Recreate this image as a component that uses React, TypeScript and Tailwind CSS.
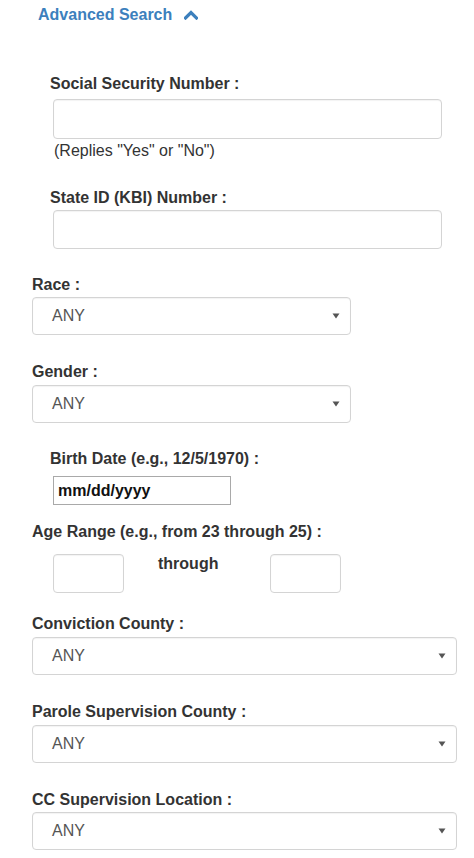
import React from 'react';

const Caret: React.FC = () => (
  <svg width="8" height="6" viewBox="0 0 8 6" className="shrink-0">
    <path d="M0.5 0.5 L7.5 0.5 L4 5.5 Z" fill="#555" />
  </svg>
);

const SelectBox: React.FC<{ width: string; mt: string }> = ({ width, mt }) => (
  <div
    className={`${width} ${mt} h-[38px] flex items-center justify-between pl-[19px] pr-[10px] border border-[#d4d4d4] rounded-[4px] bg-white shadow-[inset_0_1px_1px_rgba(0,0,0,0.05)] text-[16px] text-[#555]`}
  >
    <span>ANY</span>
    <Caret />
  </div>
);

const TextBox: React.FC<{ className: string }> = ({ className }) => (
  <div className={`border border-[#d4d4d4] rounded-[4px] bg-white shadow-[inset_0_1px_1px_rgba(0,0,0,0.05)] ${className}`} />
);

const Label: React.FC<{ children: React.ReactNode; className?: string }> = ({ children, className = '' }) => (
  <div className={`text-[16px] leading-[20px] font-bold text-[#333] ${className}`}>{children}</div>
);

const App: React.FC = () => {
  return (
    <div
      className="w-[474px] h-[858px] bg-white overflow-hidden"
      style={{ fontFamily: '"Liberation Sans", Arial, sans-serif' }}
    >
      {/* header */}
      <div className="mt-[5px] pl-[38px] flex items-center gap-[12px] text-[16px] leading-[20px] font-bold text-[#3c80bd]">
        <span>Advanced Search</span>
        <svg width="14" height="10" viewBox="0 0 14 10">
          <path d="M1.5 8 L7 2.5 L12.5 8" fill="none" stroke="#3c80bd" strokeWidth="3.2" strokeLinecap="square" />
        </svg>
      </div>

      {/* SSN + state id */}
      <div className="pl-[50px]">
        <Label className="mt-[49px]">Social Security Number :</Label>
        <TextBox className="mt-[5px] ml-[3px] w-[389px] h-[40px]" />
        <div className="mt-[2px] ml-[4px] text-[16px] leading-[20px] text-[#333]">(Replies "Yes" or "No")</div>

        <Label className="mt-[27px]">State ID (KBI) Number :</Label>
        <TextBox className="mt-[2px] ml-[3px] w-[389px] h-[39px]" />
      </div>

      <div className="pl-[32px]">
        <Label className="mt-[26px]">Race :</Label>
        <SelectBox width="w-[319px]" mt="mt-[2px]" />

        <Label className="mt-[27px]">Gender :</Label>
        <SelectBox width="w-[319px]" mt="mt-[3px]" />
      </div>

      <div className="pl-[50px]">
        <Label className="mt-[26px]">Birth Date (e.g., 12/5/1970) :</Label>
        <div className="mt-[7px] ml-[3px] w-[178px] h-[29px] border border-[#a9a9a9] flex items-center pl-[4px] text-[16px] font-bold text-[#111]">
          mm/dd/yyyy
        </div>
      </div>

      <div className="pl-[32px]">
        <Label className="mt-[17px]">Age Range (e.g., from 23 through 25) :</Label>
        <div className="mt-[12px] ml-[21px] flex items-start">
          <TextBox className="w-[71px] h-[39px]" />
          <div className="ml-[34px] w-[112px] text-[16px] leading-[20px] font-bold text-[#333]">through</div>
          <TextBox className="w-[71px] h-[39px]" />
        </div>

        <Label className="mt-[21px]">Conviction County :</Label>
        <SelectBox width="w-[425px]" mt="mt-[3px]" />

        <Label className="mt-[27px]">Parole Supervision County :</Label>
        <SelectBox width="w-[425px]" mt="mt-[3px]" />

        <Label className="mt-[27px]">CC Supervision Location :</Label>
        <SelectBox width="w-[425px]" mt="mt-[2px]" />
      </div>
    </div>
  );
};

export default App;
